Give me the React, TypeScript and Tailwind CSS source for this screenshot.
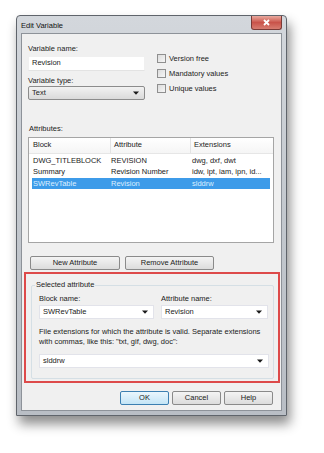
import React from "react";

const font = { fontFamily: '"Liberation Sans", Arial, sans-serif' };

function Arrow() {
  return (
    <svg width="6" height="4" viewBox="0 0 6 4" className="shrink-0">
      <path d="M0 0.5 L6 0.5 L3 3.8 Z" fill="#1a1a1a" />
    </svg>
  );
}

function Checkbox({ label }: { label: string }) {
  return (
    <div className="flex items-center h-[15px]">
      <div className="w-[9px] h-[9px] border border-[#8f8f8f] bg-gradient-to-br from-[#dcdcdc] to-[#f6f6f6]" />
      <span className="ml-[3px]">{label}</span>
    </div>
  );
}

const rows = [
  { block: "DWG_TITLEBLOCK", attr: "REVISION", ext: "dwg, dxf, dwt" },
  { block: "Summary", attr: "Revision Number", ext: "idw, ipt, iam, ipn, id..." },
  { block: "SWRevTable", attr: "Revision", ext: "slddrw", selected: true },
];

function Btn({ label, w, primary }: { label: string; w: string; primary?: boolean }) {
  return (
    <div
      className={`${w} h-[14px] rounded-[2px] border flex items-center justify-center ${
        primary
          ? "border-[#3c7fb1] bg-gradient-to-b from-[#eaf6fd] to-[#c4e5f6]"
          : "border-[#8a8a8a] bg-gradient-to-b from-[#f4f4f4] to-[#dcdcdc]"
      }`}
    >
      {label}
    </div>
  );
}

function Combo({ value, w }: { value: string; w: string }) {
  return (
    <div className={`${w} h-[14px] bg-white border border-[#e2e3ea] flex items-center pl-[3px] pr-[5px] justify-between`}>
      <span>{value}</span>
      <Arrow />
    </div>
  );
}

export default function App() {
  return (
    <div className="w-[324px] h-[453px] bg-white pt-[15px] pl-[16px] text-[7.5px] leading-none text-[#222]" style={font}>
      <div className="w-[271px] h-[401px] border border-[#5f646b] rounded-t-[4px] bg-gradient-to-b from-[#d3d7dc] via-[#c3c8ce] to-[#b9bec5] shadow-[3px_8px_12px_rgba(0,0,0,0.45)] flex flex-col">
        {/* title bar */}
        <div className="h-[17px] flex items-start justify-between pl-[4px] pr-[4px]">
          <span className="mt-[6px] text-[7.5px] text-[#111]">Edit Variable</span>
          <div className="w-[31px] h-[14px] rounded-b-[3px] border border-[#7a3a36] border-t-0 bg-gradient-to-b from-[#e8a99f] via-[#c9534a] to-[#d77c70] flex items-center justify-center">
            <svg width="7" height="7" viewBox="0 0 7 7">
              <path d="M1 1 L6 6 M6 1 L1 6" stroke="#fff" strokeWidth="1.8" />
            </svg>
          </div>
        </div>
        {/* client area */}
        <div className="mx-[4px] mb-[4px] flex-1 bg-[#f0f0f0] border border-[#8d9299]">
          <div className="flex pl-[6px] pt-[11px]">
            <div className="w-[117px]">
              <div>Variable name:</div>
              <div className="mt-[3px] h-[15px] bg-white border border-[#f0f0f0] border-b-[#e3e3e3] flex items-center pl-[3px]">Revision</div>
              <div className="mt-[6px]">Variable type:</div>
              <div className="mt-[2px] h-[14px] border border-[#8c8c8c] rounded-[2px] bg-gradient-to-b from-[#f2f2f2] to-[#dadada] flex items-center justify-between pl-[3px] pr-[5px]">
                <span>Text</span>
                <Arrow />
              </div>
            </div>
            <div className="ml-[12px] mt-[6px]">
              <Checkbox label="Version free" />
              <Checkbox label="Mandatory values" />
              <Checkbox label="Unique values" />
            </div>
          </div>

          <div className="pl-[7px] mt-[25px]">Attributes:</div>
          <div className="ml-[6px] mt-[4px] w-[246px] h-[106px] bg-white border border-[#a5a5a5]">
            <div className="flex h-[16px] border-b border-[#e6e6e6] bg-gradient-to-b from-white to-[#f5f5f5]">
              <div className="w-[82px] border-r border-[#e3e3e3] pl-[4px] flex items-center">Block</div>
              <div className="w-[80px] border-r border-[#e3e3e3] pl-[3px] flex items-center">Attribute</div>
              <div className="flex-1 pl-[3px] flex items-center">Extensions</div>
            </div>
            <div className="pt-[1px] px-[3px]">
              {rows.map((r) => (
                <div
                  key={r.block}
                  className={`flex h-[11.5px] items-center ${r.selected ? "bg-[#3d9be9] text-[#dcefff]" : ""}`}
                >
                  <div className="w-[79px] pl-[1px]">{r.block}</div>
                  <div className="w-[81px]">{r.attr}</div>
                  <div className="flex-1 whitespace-nowrap">{r.ext}</div>
                </div>
              ))}
            </div>
          </div>

          <div className="flex ml-[8px] mt-[13px] gap-[5px]">
            <Btn label="New Attribute" w="w-[90px]" />
            <Btn label="Remove Attribute" w="w-[89px]" />
          </div>

          {/* highlighted group */}
          <div className="ml-[2px] mt-[2px] w-[256px] h-[111px] border-2 border-[#dd4a4a] pt-[8px] pl-[5px]">
            <div className="relative w-[243px] h-[94px] border border-[#d5dfe5] rounded-[2px] mt-[3px]">
              <div className="absolute -top-[5px] left-[3px] bg-[#f0f0f0] px-[1px]">Selected attribute</div>
              <div className="flex pl-[7px] pt-[9px] gap-[7px]">
                <div>
                  <div>Block name:</div>
                  <div className="mt-[3px]">
                    <Combo value="SWRevTable" w="w-[115px]" />
                  </div>
                </div>
                <div>
                  <div>Attribute name:</div>
                  <div className="mt-[3px]">
                    <Combo value="Revision" w="w-[107px]" />
                  </div>
                </div>
              </div>
              <div className="pl-[7px] mt-[8px] leading-[10px] w-[236px]">
                File extensions for which the attribute is valid. Separate extensions with commas, like this: "txt, gif, dwg, doc":
              </div>
              <div className="pl-[7px] mt-[7px]">
                <Combo value="slddrw" w="w-[230px]" />
              </div>
            </div>
          </div>

          <div className="flex justify-end gap-[3px] pr-[8px] mt-[8px]">
            <Btn label="OK" w="w-[49px]" primary />
            <Btn label="Cancel" w="w-[49px]" />
            <Btn label="Help" w="w-[49px]" />
          </div>
        </div>
      </div>
    </div>
  );
}
